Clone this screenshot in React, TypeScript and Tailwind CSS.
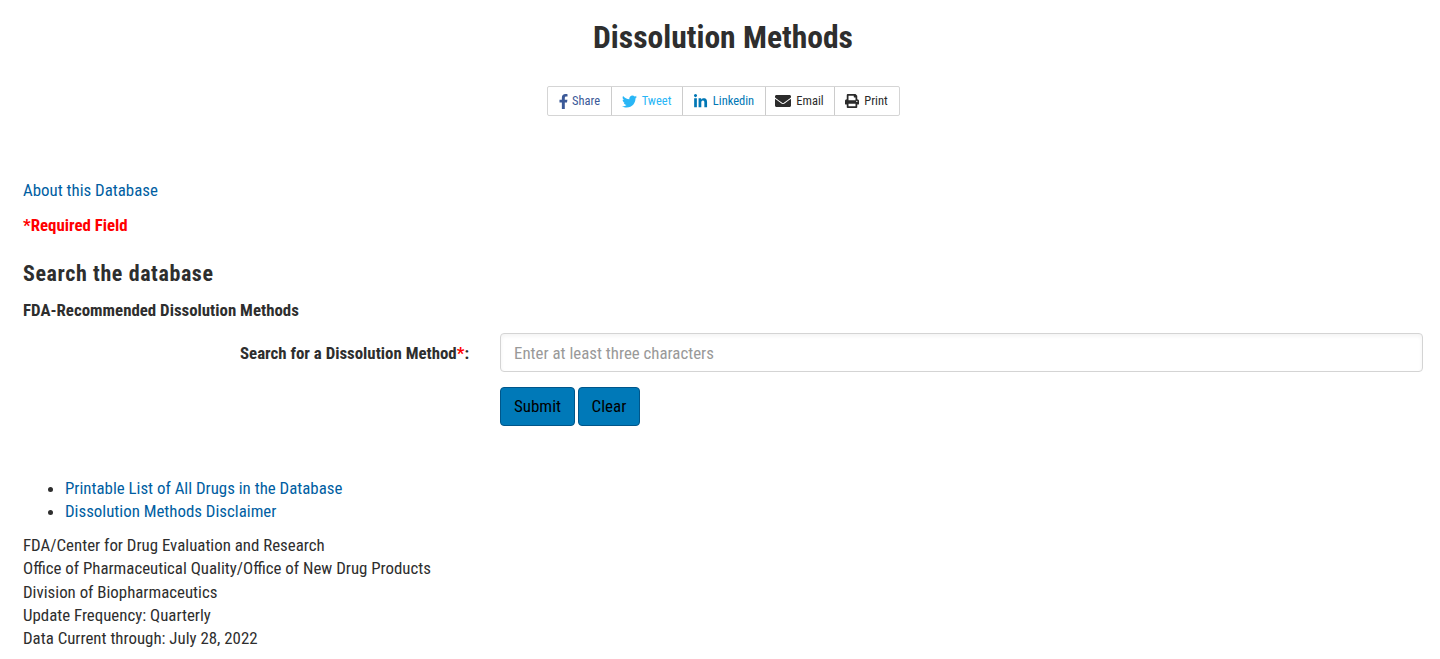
import React from 'react';
import { FaFacebookF, FaTwitter, FaLinkedinIn, FaEnvelope, FaPrint } from 'react-icons/fa';

const shareItems = [
  { label: 'Share', icon: FaFacebookF, color: 'text-[#3b5998]', iconClass: 'text-[15px]', width: 'w-[63px] pr-[2px]', gap: 'gap-[1px]' },
  { label: 'Tweet', icon: FaTwitter, color: 'text-[#29b6f6]', iconClass: 'text-[15px]', width: 'w-[71px]', gap: 'gap-[5px]' },
  { label: 'Linkedin', icon: FaLinkedinIn, color: 'text-[#0077b5]', iconClass: 'text-[15px]', width: 'w-[83px]', gap: 'gap-[5px]' },
  { label: 'Email', icon: FaEnvelope, color: 'text-[#2b2b2b]', iconClass: 'text-[16px]', width: 'w-[69px]', gap: 'gap-[5px]' },
  { label: 'Print', icon: FaPrint, color: 'text-[#2b2b2b]', iconClass: 'text-[14px]', width: 'w-[65px]', gap: 'gap-[5px]' },
];

const App = () => {
  return (
    <div className="h-[659px] overflow-hidden bg-white pl-[23px] pr-[17px] font-['Roboto_Condensed','Roboto',sans-serif] text-[#2e2e2e]">
      <h1 className="pt-[19px] text-center text-[31.6px] font-bold leading-[38px]">Dissolution Methods</h1>

      {/* Share buttons */}
      <div className="mt-[29px] flex justify-center">
        <div className="flex h-[30px] rounded-[2px] border border-[#d5d5d5]">
          {shareItems.map((item, i) => {
            const Icon = item.icon;
            return (
              <a key={item.label} className={`flex items-center justify-center text-[12.5px] ${item.gap} ${item.width} ${item.color} ${i > 0 ? 'border-l border-[#ccc]' : ''}`}>
                <Icon className={item.iconClass} />
                {item.label}
              </a>
            );
          })}
        </div>
      </div>

      <a className="mt-[63px] block text-[16.87px] leading-[23px] text-[#005ea2]">About this Database</a>
      <p className="mt-[12px] text-[16.87px] font-bold leading-[23px] text-[#ff0000]">*Required Field</p>
      <h2 className="mt-[23px] text-[22px] font-bold leading-[28px] tracking-[0.6px]">Search the database</h2>
      <h3 className="mt-[11px] text-[16.87px] font-bold leading-[23px]">FDA-Recommended Dissolution Methods</h3>

      {/* Search form */}
      <div className="mt-[11px] flex">
        <label className="w-[446px] pt-[9px] text-right text-[16.87px] font-bold leading-[23px]">
          Search for a Dissolution Method<span className="text-[#ff0000]">*</span>:
        </label>
        <div className="ml-[31px] flex-1">
          <input
            placeholder="Enter at least three characters"
            className="h-[39px] w-full rounded-[4px] border border-[#d4d4d4] px-[13px] text-[16.87px] shadow-inner outline-none placeholder:text-[#999]"
          />
          <div className="mt-[15px] flex gap-[3px]">
            <button className="h-[39px] w-[75px] rounded-[4px] border border-[#00568a] bg-[#0079b8] text-[17px] text-black">Submit</button>
            <button className="h-[39px] w-[62px] rounded-[4px] border border-[#00568a] bg-[#0079b8] text-[17px] text-black">Clear</button>
          </div>
        </div>
      </div>

      <ul className="mt-[51px] list-disc pl-[42px] text-[16.87px] leading-[23px] text-[#005ea2]">
        <li className="marker:text-[#2e2e2e]"><a>Printable List of All Drugs in the Database</a></li>
        <li className="marker:text-[#2e2e2e]"><a>Dissolution Methods Disclaimer</a></li>
      </ul>

      <p className="mt-[11.2px] text-[16.87px] leading-[23.2px]">
        FDA/Center for Drug Evaluation and Research<br />
        Office of Pharmaceutical Quality/Office of New Drug Products<br />
        Division of Biopharmaceutics<br />
        Update Frequency: Quarterly<br />
        Data Current through: July 28, 2022
      </p>
    </div>
  );
};

export default App;
